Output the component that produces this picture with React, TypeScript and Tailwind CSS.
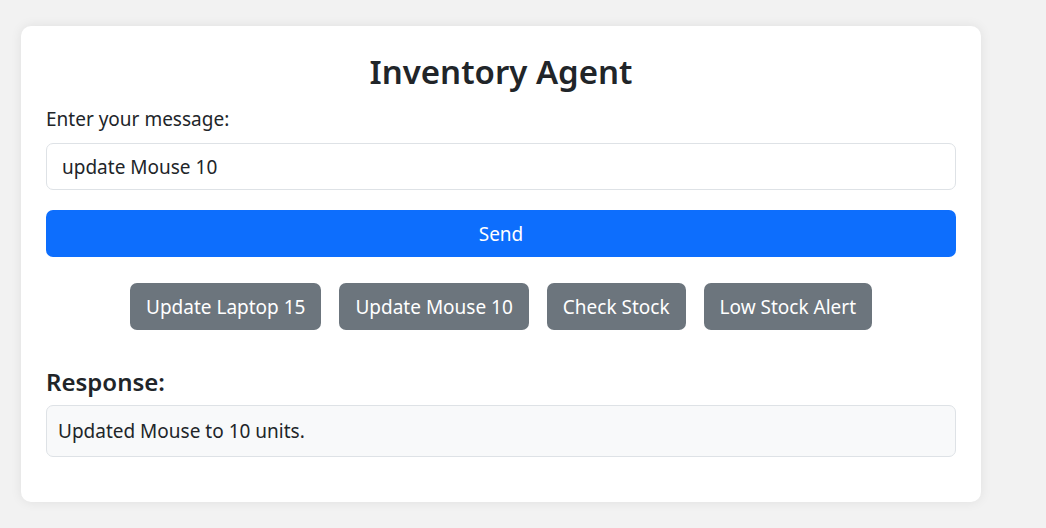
export default function App() {
  const quick = ["Update Laptop 15", "Update Mouse 10", "Check Stock", "Low Stock Alert"]

  return (
    <div
      className="min-h-screen bg-[#f2f2f2] pt-[26px] pl-[21px] text-[#212529]"
      style={{ fontFamily: '"Noto Sans", "Open Sans", sans-serif' }}
    >
      <div className="w-[960px] rounded-[10px] bg-white px-[25px] pt-[25px] pb-[45px] shadow-[0_0_12px_rgba(0,0,0,0.08)]">
        <h2 className="text-center text-[33px] font-semibold leading-[1.2] mb-[12px] pt-[1px]">Inventory Agent</h2>

        <label className="block text-[19px] leading-[30px] mb-[9px]">Enter your message:</label>
        <div className="h-[47px] rounded-[7px] border border-[#dee2e6] px-[15px] pt-[2px] flex items-center text-[19px]">
          update Mouse 10
        </div>

        <button className="mt-[20px] h-[47px] w-full rounded-[7px] bg-[#0d6efd] pt-[2px] text-[19px] text-white">
          Send
        </button>

        <div className="mt-[26px] flex justify-center gap-[18px]">
          {quick.map((q) => (
            <button
              key={q}
              className="h-[47px] rounded-[7px] bg-[#6c757d] px-[16px] pt-[2px] text-[19px] text-white"
            >
              {q}
            </button>
          ))}
        </div>

        <h4 className="mt-[37px] mb-[8px] text-[24px] font-semibold leading-[30px]">Response:</h4>
        <div className="h-[52px] rounded-[7px] border border-[#dee2e6] bg-[#f8f9fa] px-[11px] pt-[2px] flex items-center text-[19px]">
          Updated Mouse to 10 units.
        </div>
      </div>
    </div>
  )
}
